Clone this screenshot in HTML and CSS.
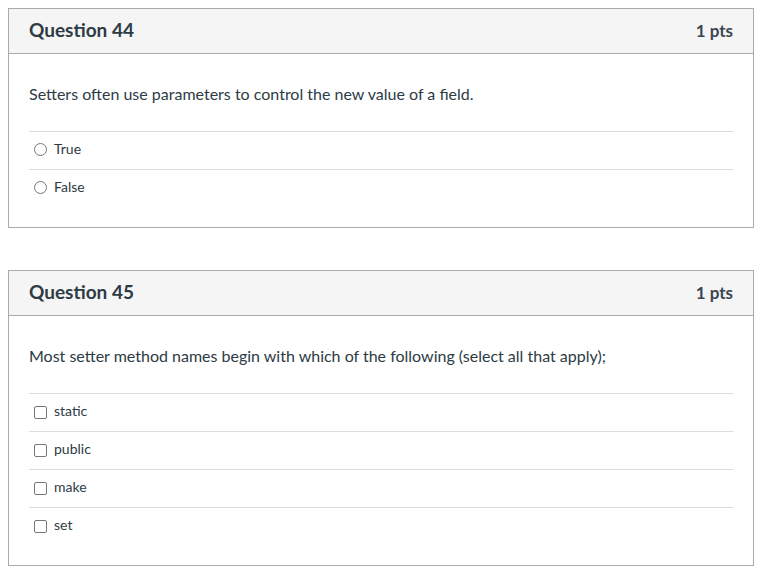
FILE: index.html
```html
<!DOCTYPE html>
<html>
<head>
<meta charset="utf-8">
<link rel="stylesheet" href="styles.css">
</head>
<body>
<div class="question">
  <div class="q-header">
    <span class="q-title">Question 44</span>
    <span class="q-pts">1 pts</span>
  </div>
  <div class="q-body">
    <div class="q-text">Setters often use parameters to control the new value of a field.</div>
    <div class="answers">
      <div class="answer"><span class="radio"></span><span class="label">True</span></div>
      <div class="answer"><span class="radio"></span><span class="label">False</span></div>
    </div>
  </div>
</div>
<div class="question">
  <div class="q-header">
    <span class="q-title">Question 45</span>
    <span class="q-pts">1 pts</span>
  </div>
  <div class="q-body">
    <div class="q-text">Most setter method names begin with which of the following (select all that apply);</div>
    <div class="answers">
      <div class="answer"><span class="check"></span><span class="label">static</span></div>
      <div class="answer"><span class="check"></span><span class="label">public</span></div>
      <div class="answer"><span class="check"></span><span class="label">make</span></div>
      <div class="answer"><span class="check"></span><span class="label">set</span></div>
    </div>
  </div>
</div>
</body>
</html>
```
FILE: styles.css
```css
html, body {
  background: #ffffff;
}
body {
  margin: 8px;
  font-family: Lato, "Noto Sans", sans-serif;
  color: #2d3b45;
}
.question {
  border: 1px solid #aaaaaa;
  margin-bottom: 42px;
}
.question:last-child {
  margin-bottom: 0;
}
.q-header {
  height: 45px;
  box-sizing: border-box;
  background: #f5f5f5;
  border-bottom: 1px solid #aaaaaa;
  display: flex;
  align-items: center;
  justify-content: space-between;
  padding: 0 20px;
}
.q-title {
  font-size: 19px;
  font-weight: 700;
  margin-top: -4px;
}
.q-pts {
  font-size: 17px;
  font-weight: 700;
  color: #3b4650;
  margin-top: -2px;
}
.q-body {
  padding: 0 20px 20px;
}
.q-text {
  font-size: 16px;
  line-height: 20px;
  padding: 30px 0 27px;
}
.answer {
  height: 38px;
  box-sizing: border-box;
  border-top: 1px solid #dddddd;
  padding-bottom: 5px;
  display: flex;
  align-items: center;
  font-size: 14px;
}
.radio {
  width: 11px;
  height: 11px;
  border: 1px solid #777777;
  border-radius: 50%;
  margin: 3px 7px 0 5px;
}
.check {
  width: 11px;
  height: 11px;
  border: 1px solid #777777;
  border-radius: 2px;
  margin: 5px 7px 0 5px;
}
.label {
  color: #2d3b45;
}
```
